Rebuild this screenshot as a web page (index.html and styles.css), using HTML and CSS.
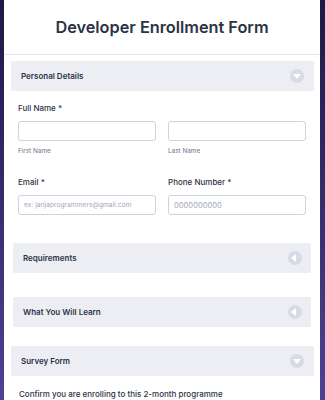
FILE: index.html
```html
<!DOCTYPE html>
<html lang="en">
<head>
    <meta charset="UTF-8">
    <meta name="viewport" content="width=device-width, initial-scale=1.0">
    <title>Developer Enrollment Form</title>
    <link rel="stylesheet" href="styles.css">
</head>
<body>
    <div class="form-card">
        <div class="form-header">
            <h1>Developer Enrollment Form</h1>
        </div>

        <div class="section-head open">
            <span>Personal Details</span>
            <span class="toggle down"></span>
        </div>

        <div class="fields">
            <label class="field-label">Full Name *</label>
            <div class="field-row">
                <div class="field-col">
                    <input type="text" class="input">
                    <div class="sub-label">First Name</div>
                </div>
                <div class="field-col">
                    <input type="text" class="input">
                    <div class="sub-label">Last Name</div>
                </div>
            </div>

            <div class="field-row second">
                <div class="field-col">
                    <label class="field-label">Email *</label>
                    <input type="text" class="input" placeholder="ex: janjaprogrammers@gmail.com">
                </div>
                <div class="field-col">
                    <label class="field-label">Phone Number *</label>
                    <input type="text" class="input phone" placeholder="0000000000">
                </div>
            </div>
        </div>

        <div class="section-head closed first-closed">
            <span>Requirements</span>
            <span class="toggle left"></span>
        </div>
        <div class="section-head closed">
            <span>What You Will Learn</span>
            <span class="toggle left"></span>
        </div>
        <div class="section-head open survey">
            <span>Survey Form</span>
            <span class="toggle down"></span>
        </div>

        <p class="question">Confirm you are enrolling to this 2-month programme</p>
    </div>
</body>
</html>
```

FILE: styles.css
```css
html, body {
    height: 100%;
}
body {
    margin: 0;
    padding: 0 5px 0 4px;
    font-family: Inter, "Noto Sans", sans-serif;
    color: #2c3345;
    background: linear-gradient(#1d1846, #4e4294);
    overflow: hidden;
}
.form-card {
    background: #fff;
    min-height: 420px;
}
.form-header {
    height: 54px;
    border-bottom: 1px solid #e4e6ec;
    display: flex;
    align-items: center;
    justify-content: center;
}
.form-header h1 {
    margin: 0;
    font-size: 16.3px;
    font-weight: 600;
    color: #2c3345;
}
.section-head {
    display: flex;
    align-items: center;
    justify-content: space-between;
    height: 30px;
    background-color: #eceef3;
    border-radius: 2px;
    font-size: 8px;
    font-weight: 600;
    color: #2c3345;
}
.section-head.open {
    margin: 6px 6px 0 7px;
    padding: 0 10px;
}
.section-head.closed {
    margin: 24px 9px 0 9px;
    padding: 0 9px 0 10px;
}
.section-head.first-closed {
    margin-top: 28px;
}
.section-head.survey {
    margin-top: 19px;
}
.toggle {
    position: relative;
    width: 14px;
    height: 14px;
    border-radius: 50%;
    background-color: #d8dae5;
}
.toggle::after {
    content: "";
    position: absolute;
    width: 0;
    height: 0;
}
.toggle.down::after {
    left: 3px;
    top: 5px;
    border-left: 4px solid transparent;
    border-right: 4px solid transparent;
    border-top: 5px solid #fff;
}
.toggle.left::after {
    left: 3px;
    top: 3px;
    border-top: 4px solid transparent;
    border-bottom: 4px solid transparent;
    border-right: 5px solid #fff;
}
.fields {
    padding: 10px 14px 0 14px;
}
.field-label {
    display: block;
    font-size: 8px;
    font-weight: 500;
    line-height: 14px;
    color: #2c3345;
    margin-bottom: 6px;
}
.field-row {
    display: flex;
    gap: 12px;
}
.field-row.second {
    margin-top: 19px;
}
.field-col {
    flex: 1;
}
.input {
    display: block;
    box-sizing: border-box;
    width: 100%;
    height: 20px;
    margin: 0;
    padding: 0 5px;
    border: 1px solid #ccd2de;
    border-radius: 3px;
    font-family: Inter, "Noto Sans", sans-serif;
    font-size: 6.7px;
    color: #2c3345;
    background: #fff;
}
.input.phone {
    font-size: 7.6px;
}
.input::placeholder {
    color: #a3aabb;
}
.sub-label {
    margin-top: 5px;
    font-size: 6.4px;
    line-height: 10px;
    color: #6b7489;
}
.question {
    margin: 11px 0 0 15px;
    font-size: 8px;
    font-weight: 500;
    line-height: 14px;
    color: #2c3345;
}
```
